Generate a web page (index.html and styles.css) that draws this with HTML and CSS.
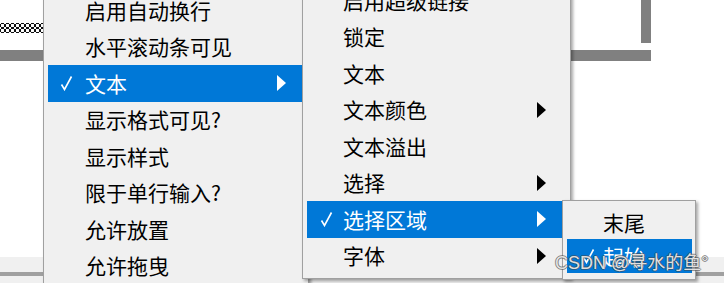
FILE: index.html
```html
<!DOCTYPE html>
<html lang="zh-CN">
<head>
  <meta charset="UTF-8">
  <title>菜单</title>
  <link rel="stylesheet" href="styles.css">
</head>
<body>

  <!-- 底层窗口 -->
  <div class="screen">
    <div class="top">
      <div class="dots-col"><div class="dots"></div></div>
      <div class="vbar"></div>
    </div>
    <div class="hbar"></div>
    <div class="gap"></div>
    <div class="status"><div class="status-line"></div></div>
  </div>

  <!-- 一级菜单 -->
  <ul class="menu menu-main">
    <li class="item"><span class="tick"></span>启用自动换行</li>
    <li class="item"><span class="tick"></span>水平滚动条可见</li>
    <li class="item on">
      <span class="tick"><svg width="13" height="16" viewBox="0 0 13 16"><path d="M1.5 9.5 L4.5 14.5 L11.5 1.5" fill="none" stroke="#fff" stroke-width="1.6"/></svg></span>
      文本<span class="arrow"></span>
    </li>
    <li class="item"><span class="tick"></span>显示格式可见?</li>
    <li class="item"><span class="tick"></span>显示样式</li>
    <li class="item"><span class="tick"></span>限于单行输入?</li>
    <li class="item"><span class="tick"></span>允许放置</li>
    <li class="item"><span class="tick"></span>允许拖曳</li>
  </ul>

  <!-- 二级菜单 -->
  <ul class="menu menu-sub">
    <li class="item"><span class="tick"></span>启用超级链接</li>
    <li class="item"><span class="tick"></span>锁定</li>
    <li class="item"><span class="tick"></span>文本</li>
    <li class="item"><span class="tick"></span>文本颜色<span class="arrow"></span></li>
    <li class="item"><span class="tick"></span>文本溢出</li>
    <li class="item"><span class="tick"></span>选择<span class="arrow"></span></li>
    <li class="item on">
      <span class="tick"><svg width="13" height="16" viewBox="0 0 13 16"><path d="M1.5 9.5 L4.5 14.5 L11.5 1.5" fill="none" stroke="#fff" stroke-width="1.6"/></svg></span>
      选择区域<span class="arrow"></span>
    </li>
    <li class="item"><span class="tick"></span>字体<span class="arrow"></span></li>
  </ul>

  <!-- 三级菜单 -->
  <ul class="menu menu-pick">
    <li class="item"><span class="tick"></span>末尾</li>
    <li class="item on">
      <span class="tick"><svg width="13" height="16" viewBox="0 0 13 16"><path d="M1.5 9.5 L4.5 14.5 L11.5 1.5" fill="none" stroke="#fff" stroke-width="1.6"/></svg></span>
      起始
    </li>
  </ul>

  <div class="mark">CSDN @寻水的鱼°</div>

</body>
</html>
```

FILE: styles.css
```css
body {
  margin: 0;
  width: 724px;
  height: 283px;
  overflow: hidden;
  position: relative;
  background: #fff;
  font-family: "Noto Sans CJK SC", "Liberation Sans", sans-serif;
}

/* 底层窗口 */
.top {
  display: flex;
  height: 50px;
}
.dots-col {
  width: 43px;
  padding-top: 23px;
}
.dots {
  height: 10px;
  background: radial-gradient(circle, #fff 1.4px, #111 2px, #111 2.4px, #fff 2.6px) 0 0 / 5px 5px;
}
.vbar {
  margin-left: 598px;
  width: 10px;
  height: 43px;
  background: #808080;
}
.hbar {
  width: 651px;
  height: 11px;
  background: #808080;
}
.gap {
  height: 196px;
}
.status {
  height: 26px;
  background: #f0f0f0;
}
.status-line {
  position: relative;
  top: 15px;
  height: 4px;
  background: #a0a0a0;
}

/* 菜单 */
.menu {
  position: absolute;
  margin: 0;
  padding: 4px;
  list-style: none;
  background: #f0f0f0;
  border: 1px solid #a0a0a0;
  box-shadow: 2px 2px 3px rgba(0, 0, 0, 0.35);
  font-size: 21px;
  line-height: 1;
  color: #000;
}
.menu-main {
  left: 43px;
  top: -13px;
  width: 256px;
}
.menu-sub {
  left: 302px;
  top: -23px;
  width: 259px;
}
.menu-pick {
  left: 562px;
  top: 200px;
  width: 125px;
  padding: 4px 3px 6px 4px;
}
.item {
  display: flex;
  align-items: center;
  height: 36.5px;
}
.menu-pick .item {
  height: 34px;
}
.item.on {
  background: #0078d7;
  color: #fff;
}
.tick {
  display: flex;
  align-items: center;
  width: 37px;
  height: 100%;
  padding-left: 12px;
  box-sizing: border-box;
}
.menu-sub .tick {
  width: 36px;
  padding-left: 13px;
}
.menu-pick .tick {
  width: 36px;
  padding-left: 15px;
}
.arrow {
  margin-left: auto;
  margin-right: 18px;
  width: 0;
  height: 0;
  border-left: 9px solid currentColor;
  border-top: 8px solid transparent;
  border-bottom: 8px solid transparent;
}
.menu-sub .arrow {
  margin-right: 20px;
}

/* 水印 */
.mark {
  position: absolute;
  left: 555px;
  top: 252px;
  font-family: "Liberation Sans", "Noto Sans CJK SC", sans-serif;
  font-size: 18px;
  line-height: 22px;
  color: rgba(245, 245, 245, 0.9);
  text-shadow: 1px 0 0 rgba(70, 70, 70, 0.55), -1px 0 0 rgba(70, 70, 70, 0.55),
    0 1px 0 rgba(70, 70, 70, 0.55), 0 -1px 0 rgba(70, 70, 70, 0.55);
}
```
